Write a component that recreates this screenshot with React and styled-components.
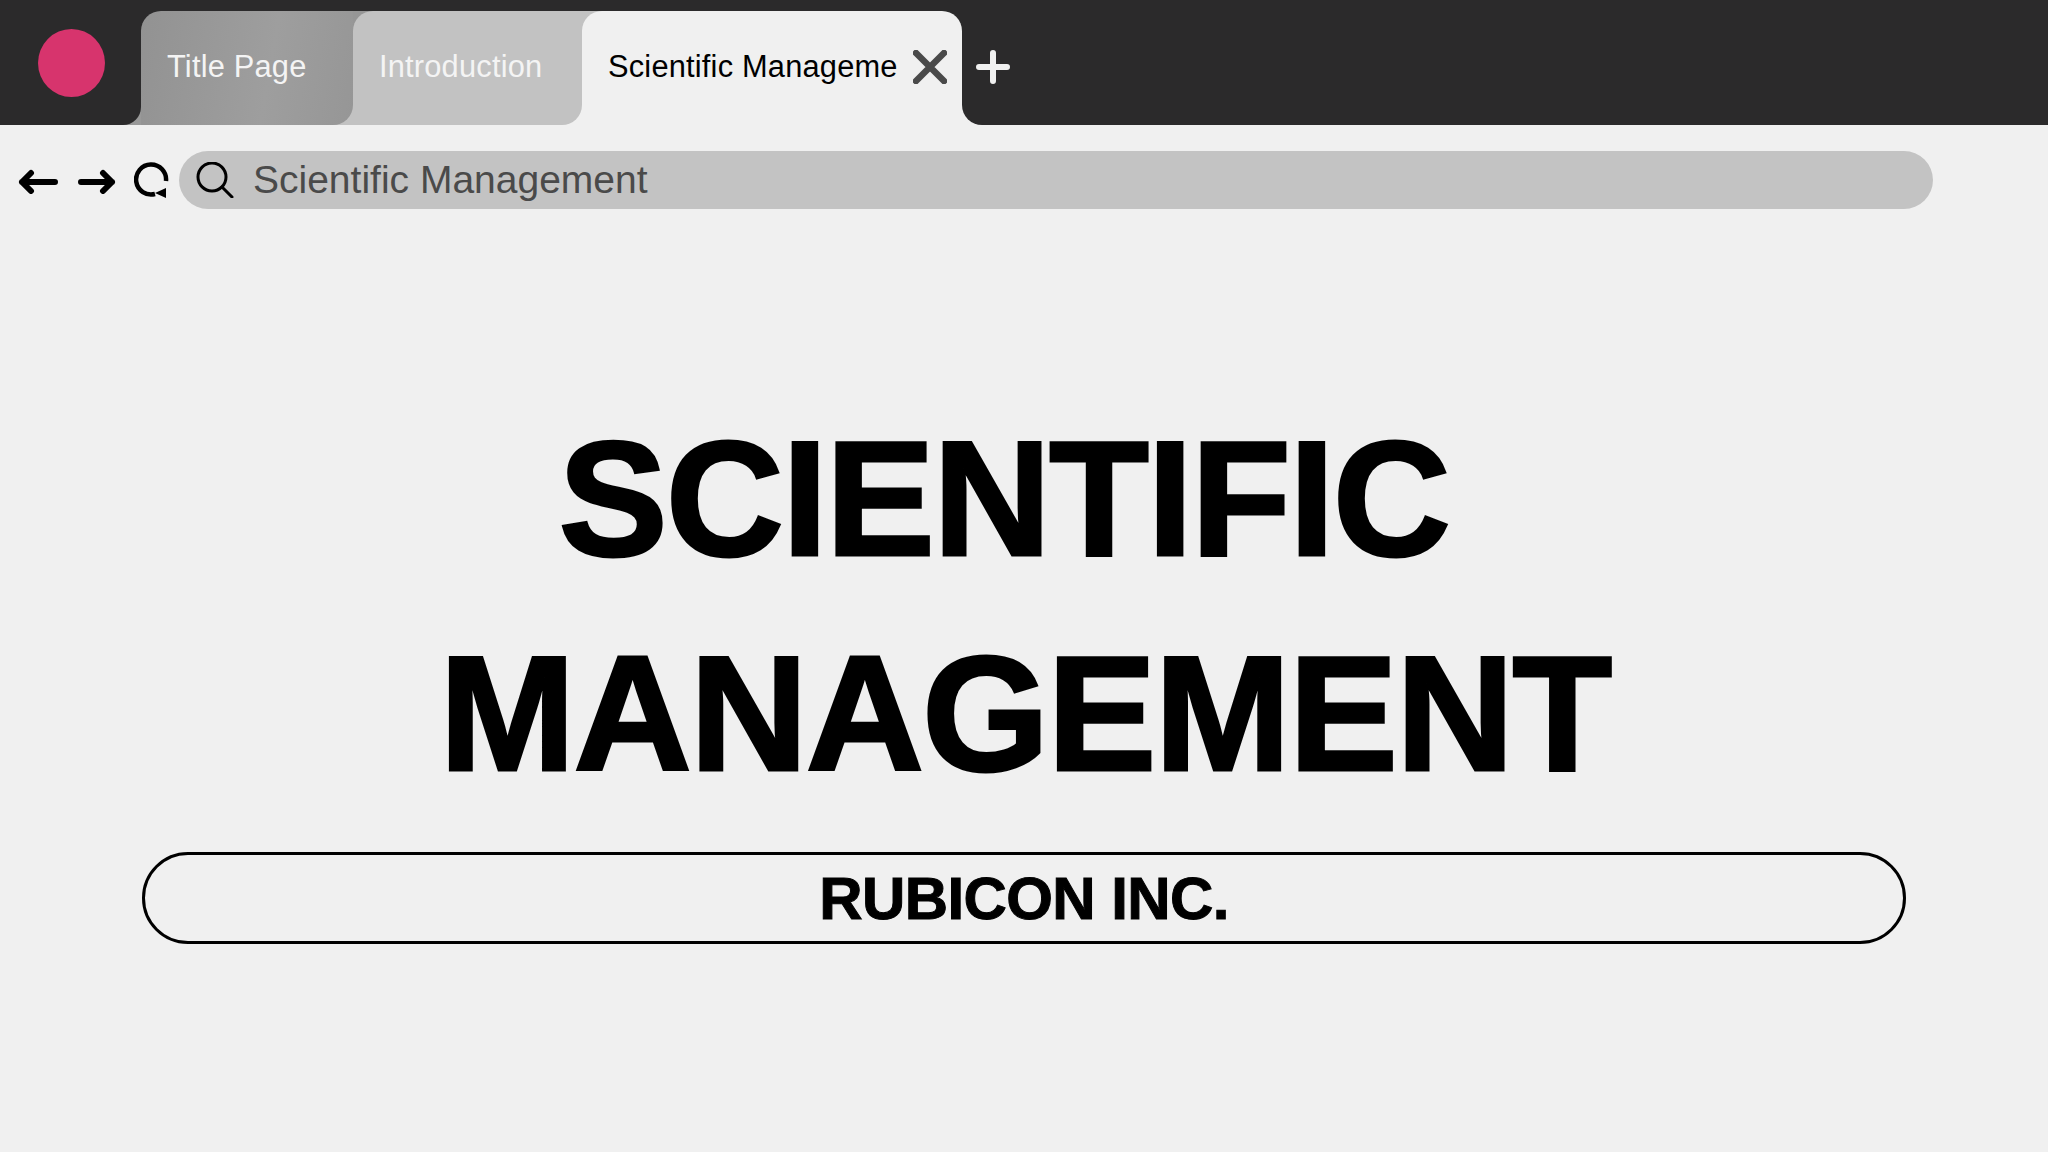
import styled, { createGlobalStyle } from "styled-components";

const Global = createGlobalStyle`
  html, body {
    margin: 0;
    padding: 0;
    background: #f0f0f0;
  }
`;

const Page = styled.div`
  width: 2048px;
  height: 1152px;
  overflow: hidden;
  background: #f0f0f0;
  font-family: "Liberation Sans", Arial, sans-serif;
  color: #000;
`;

const TabBar = styled.div`
  display: flex;
  height: 125px;
  background: #2b2a2b;
`;

const LogoSlot = styled.div`
  width: 141px;
  background: linear-gradient(#2b2a2b 50%, #999 50%);
`;

const LogoCell = styled.div`
  height: 100%;
  display: flex;
  align-items: center;
  padding-left: 38px;
  box-sizing: border-box;
  background: #2b2a2b;
  border-bottom-right-radius: 18px;
`;

const Logo = styled.div`
  width: 67px;
  height: 68px;
  border-radius: 50%;
  background: #d7346d;
`;

const TabSlot = styled.div`
  margin-top: 11px;
  width: ${(p) => p.$width}px;
  background: ${(p) => p.$behind};
`;

const Tab = styled.div`
  height: 100%;
  display: flex;
  align-items: center;
  box-sizing: border-box;
  padding: 0 0 2px 26px;
  background: ${(p) => p.$bg};
  color: ${(p) => p.$color};
  border-radius: ${(p) => p.$radius};
  font-size: 30.8px;
  letter-spacing: 0.2px;
  white-space: nowrap;
`;

const CloseIcon = styled.svg`
  flex: none;
  margin-left: 15px;
`;

const NewTabCorner = styled.div`
  flex: 1;
  background: linear-gradient(#2b2a2b 50%, #f0f0f0 50%);
`;

const NewTabArea = styled.div`
  height: 100%;
  display: flex;
  align-items: center;
  box-sizing: border-box;
  padding: 8px 0 0 14px;
  background: #2b2a2b;
  border-bottom-left-radius: 20px;
`;

const Toolbar = styled.div`
  display: flex;
  align-items: center;
  padding: 26px 0 0 18px;
`;

const NavIcon = styled.svg`
  display: block;
  flex: none;
  margin-right: ${(p) => p.$gap}px;
`;

const AddressBar = styled.div`
  width: 1754px;
  height: 58px;
  display: flex;
  align-items: center;
  box-sizing: border-box;
  padding-left: 17px;
  border-radius: 29px;
  background: #c3c3c3;
`;

const AddressText = styled.span`
  margin-left: 19px;
  font-size: 39px;
  color: #4a4a4a;
  white-space: nowrap;
`;

const Title = styled.h1`
  margin: 182px 0 0;
  padding-left: 2px;
  text-align: center;
  font-size: 163px;
  line-height: 215px;
  font-weight: 700;
  letter-spacing: -1.5px;
  -webkit-text-stroke: 3px #000;
`;

const TitleLine = styled.div`
  padding-right: ${(p) => p.$shift || 0}px;
`;

const Pill = styled.div`
  margin: 31px 0 0 142px;
  width: 1764px;
  height: 92px;
  display: flex;
  align-items: center;
  justify-content: center;
  box-sizing: border-box;
  border: 3px solid #000;
  border-radius: 46px;
  font-size: 60px;
  font-weight: 700;
  letter-spacing: -0.6px;
  -webkit-text-stroke: 1px #000;
`;

export default function App() {
  return (
    <Page>
      <Global />
      <TabBar>
        <LogoSlot>
          <LogoCell>
            <Logo />
          </LogoCell>
        </LogoSlot>
        <TabSlot $width={212} $behind="linear-gradient(#2b2a2b 50%, #c2c2c2 50%)">
          <Tab
            $bg="linear-gradient(100deg, #929292, #9e9e9e 60%, #969696)"
            $color="#f4f4f4"
            $radius="20px 0 20px 0"
          >
            Title Page
          </Tab>
        </TabSlot>
        <TabSlot $width={229} $behind="linear-gradient(#969696 50%, #f0f0f0 50%)">
          <Tab $bg="#c2c2c2" $color="#f4f4f4" $radius="20px 0 20px 0">
            Introduction
          </Tab>
        </TabSlot>
        <TabSlot $width={380} $behind="linear-gradient(to right, #c2c2c2 50%, #2b2a2b 50%)">
          <Tab $bg="#f0f0f0" $color="#000" $radius="20px 20px 0 0">
            Scientific Manageme
            <CloseIcon width="34" height="34" viewBox="0 0 34 34">
              <path d="M3 3 L31 31 M31 3 L3 31" stroke="#4a4a4a" strokeWidth="6.5" strokeLinecap="round" />
            </CloseIcon>
          </Tab>
        </TabSlot>
        <NewTabCorner>
          <NewTabArea>
            <svg width="34" height="34" viewBox="0 0 34 34">
              <path d="M17 3 V31 M3 17 H31" stroke="#f0f0f0" strokeWidth="6" strokeLinecap="round" />
            </svg>
          </NewTabArea>
        </NewTabCorner>
      </TabBar>
      <Toolbar>
        <NavIcon $gap={20} width="40" height="28" viewBox="0 0 40 28">
          <path d="M4 16 H37 M13 7 L4 16 L13 25" fill="none" stroke="#000" strokeWidth="6" strokeLinecap="round" strokeLinejoin="round" />
        </NavIcon>
        <NavIcon $gap={18} width="38" height="28" viewBox="0 0 38 28">
          <path d="M3 16 H34 M25 7 L34 16 L25 25" fill="none" stroke="#000" strokeWidth="6" strokeLinecap="round" strokeLinejoin="round" />
        </NavIcon>
        <NavIcon $gap={9} width="36" height="36" viewBox="0 0 36 36">
          <path d="M32 19 A15 15 0 1 0 21 32" fill="none" stroke="#000" strokeWidth="4.5" />
          <path d="M32 26 L32 36 L21 31 Z" fill="#000" />
        </NavIcon>
        <AddressBar>
          <svg width="38" height="36" viewBox="0 0 38 36">
            <circle cx="16" cy="15" r="14" fill="none" stroke="#000" strokeWidth="3" />
            <path d="M26 25 L36 35" stroke="#000" strokeWidth="3" strokeLinecap="round" />
          </svg>
          <AddressText>Scientific Management</AddressText>
        </AddressBar>
      </Toolbar>
      <Title>
        <TitleLine $shift={42}>SCIENTIFIC</TitleLine>
        <TitleLine>MANAGEMENT</TitleLine>
      </Title>
      <Pill>RUBICON INC.</Pill>
    </Page>
  );
}
